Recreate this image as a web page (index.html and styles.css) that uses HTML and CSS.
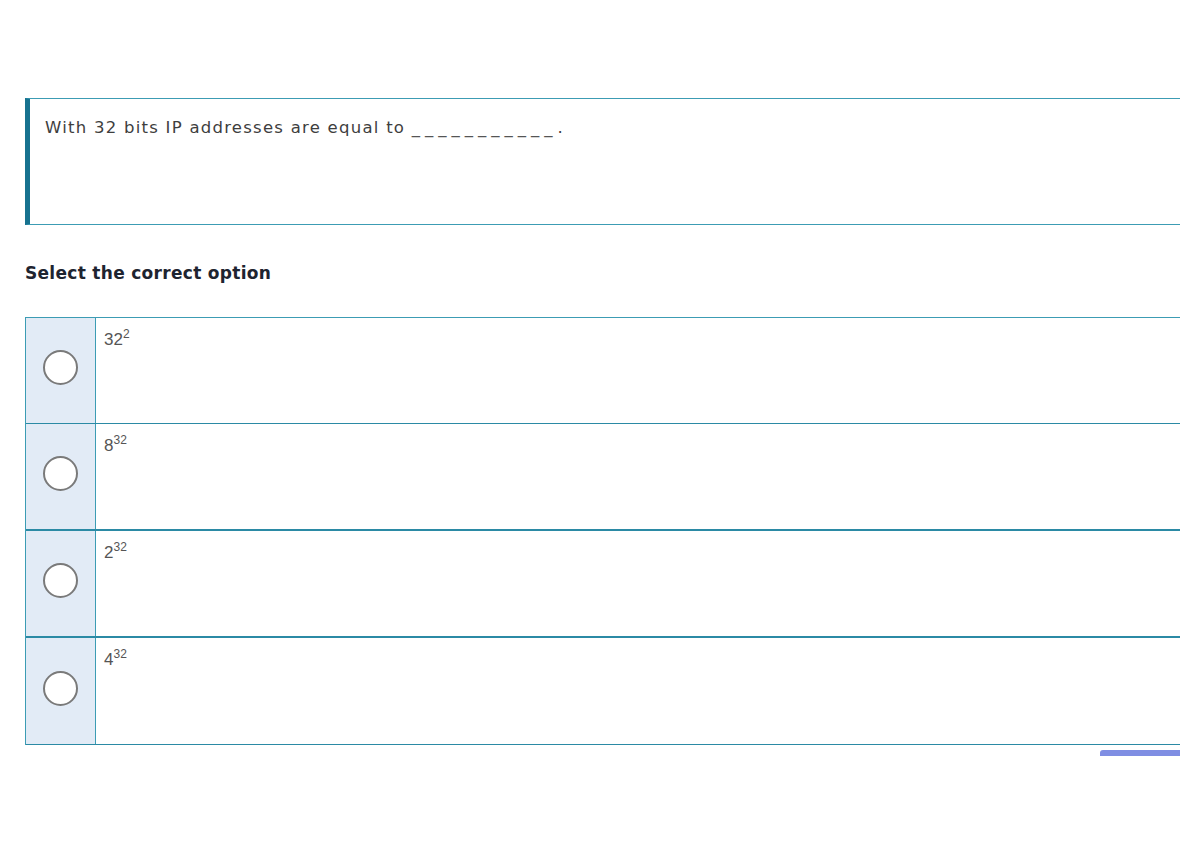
FILE: index.html
```html
<!DOCTYPE html>
<html>
<head>
<meta charset="utf-8">
<link rel="stylesheet" href="styles.css">
</head>
<body>
<div class="page">
  <div class="question">
    <p class="qtext">With 32 bits IP addresses are equal to <span class="blank">___________</span>.</p>
  </div>
  <h2 class="prompt">Select the correct option</h2>
  <div class="options">
    <div class="option">
      <div class="radio-cell"><span class="radio"></span></div>
      <div class="label">32<sup>2</sup></div>
    </div>
    <div class="option">
      <div class="radio-cell"><span class="radio"></span></div>
      <div class="label">8<sup>32</sup></div>
    </div>
    <div class="option">
      <div class="radio-cell"><span class="radio"></span></div>
      <div class="label">2<sup>32</sup></div>
    </div>
    <div class="option">
      <div class="radio-cell"><span class="radio"></span></div>
      <div class="label">4<sup>32</sup></div>
    </div>
  </div>
  <div class="footer"><span class="bar"></span></div>
</div>
</body>
</html>
```
FILE: styles.css
```css
* { box-sizing: border-box; }
html, body { margin: 0; padding: 0; background: #fff; }
body { font-family: "DejaVu Sans", "Open Sans", sans-serif; color: #333; }
.page {
  width: 1180px;
  padding: 98px 0 0 25px;
}
.question {
  height: 127px;
  border-top: 1px solid #3c9cb4;
  border-bottom: 1px solid #3c9cb4;
  border-left: 5px solid #17728f;
  padding: 18px 0 0 15px;
}
.qtext {
  margin: 0;
  font-size: 16.5px;
  font-weight: 400;
  color: #3e3e3e;
  letter-spacing: 1.25px;
  line-height: 22px;
}
.blank {
  letter-spacing: 5px;
  color: #555;
}
.prompt {
  margin: 36px 0 0 0;
  font-size: 17px;
  font-weight: 700;
  color: #1e2430;
  line-height: 24px;
  letter-spacing: 0.3px;
}
.options {
  margin-top: 32px;
  border-top: 1px solid #3c9cb4;
  border-left: 1px solid #3c9cb4;
}
.option {
  display: flex;
  height: 107px;
  border-bottom: 2px solid #2b8aa5;
}
.option:first-child { height: 106px; border-bottom-width: 1px; }
.option:last-child { border-bottom-width: 1px; }
.radio-cell {
  width: 70px;
  background: #e2ebf6;
  border-right: 1px solid #3c9cb4;
  display: flex;
  align-items: center;
  justify-content: center;
  padding-bottom: 6px;
}
.radio {
  width: 35px;
  height: 35px;
  border-radius: 50%;
  border: 2px solid #7a7a7a;
  background: #fff;
}
.label {
  padding: 11px 0 0 8px;
  font-family: "Liberation Sans", Arial, sans-serif;
  font-size: 17px;
  color: #555;
  line-height: 22px;
}
.label sup {
  font-size: 12px;
  vertical-align: 0;
  position: relative;
  top: -7px;
  margin-left: 0;
}
.footer {
  display: flex;
  justify-content: flex-end;
  padding-top: 5px;
}
.bar {
  width: 80px;
  height: 6px;
  background: #7f8ee3;
  border-radius: 3px 0 0 0;
}
```
